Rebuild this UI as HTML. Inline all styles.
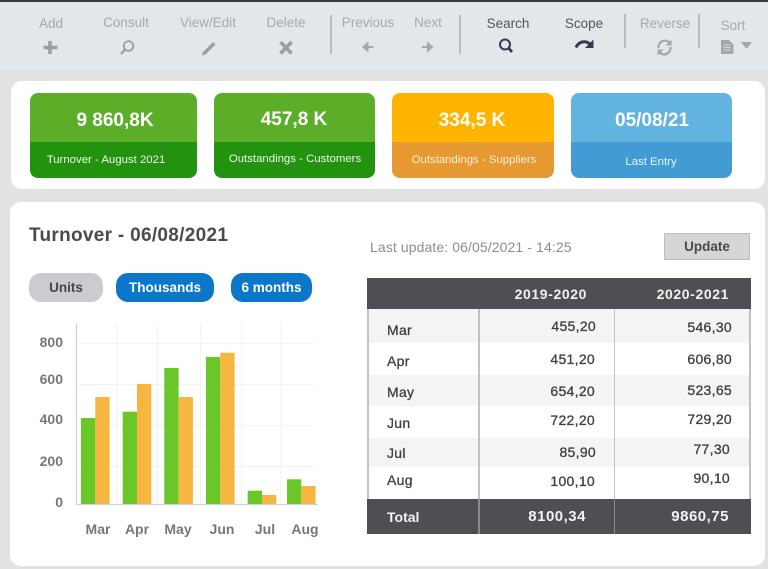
<!DOCTYPE html>
<html><head><meta charset="utf-8">
<style>
html,body{margin:0;padding:0}
body{width:768px;height:569px;overflow:hidden;position:relative;background:#e2e2e2;font-family:"Liberation Sans",sans-serif}
.a{position:absolute}
.t{position:absolute;white-space:nowrap;transform:translateX(-50%);line-height:16px}
.r{position:absolute;white-space:nowrap;transform:translateX(-100%);line-height:16px}
.l{position:absolute;white-space:nowrap;line-height:16px}
.tb{font-size:13.5px;color:#a6a8ab}
.kv{font-size:19px;font-weight:bold;color:#fff;line-height:22px}
.kl{font-size:11.4px;color:#f0f6ee}
.kpi{position:absolute;top:93px;height:85px;border-radius:8px;overflow:hidden}
.kpi div{position:absolute;left:0;right:0}
.pill{position:absolute;top:273px;height:29px;border-radius:12px;font-size:13.5px;font-weight:bold;line-height:29px;text-align:center;color:#fff;background:#0a77c9}
.ax{font-size:14px;font-weight:bold;color:#76767e}
.td{font-size:14px;color:#3f4045;letter-spacing:.3px;-webkit-text-stroke:.3px #3f4045}
svg{position:absolute;overflow:visible}
</style></head><body>
<div class="a" style="left:0;top:0;width:768px;height:2px;background:#3a3d3f"></div>
<div class="a" style="left:0;top:2px;width:768px;height:67px;background:#e4e7ea"></div>

<div class="t tb" style="left:51px;top:16px">Add</div>
<div class="t tb" style="left:126px;top:15px">Consult</div>
<div class="t tb" style="left:208px;top:15px">View/Edit</div>
<div class="t tb" style="left:286px;top:15px">Delete</div>
<div class="t tb" style="left:368px;top:15px">Previous</div>
<div class="t tb" style="left:428px;top:15px">Next</div>
<div class="t tb" style="left:508px;top:16px;color:#53565f">Search</div>
<div class="t tb" style="left:584px;top:16px;color:#53565f">Scope</div>
<div class="t tb" style="left:665px;top:16px">Reverse</div>
<div class="t tb" style="left:733px;top:18px">Sort</div>

<div class="a" style="left:330px;top:15px;width:2px;height:39px;background:#b9bcbf"></div>
<div class="a" style="left:459px;top:15px;width:2px;height:39px;background:#b9bcbf"></div>
<div class="a" style="left:624px;top:14px;width:2px;height:34px;background:#b9bcbf"></div>
<div class="a" style="left:698px;top:14px;width:2px;height:34px;background:#b9bcbf"></div>

<svg style="left:0;top:0" width="768" height="69" viewBox="0 0 768 69">
<path d="M50 41v13M43.500 47.500h14" stroke="#9c9ea1" stroke-width="3.600" fill="none"/>
<circle cx="128.500" cy="46" r="4.800" stroke="#9c9ea1" stroke-width="1.800" fill="none"/>
<path d="M125 49.500L121 54" stroke="#9c9ea1" stroke-width="2.200" fill="none"/>
<path d="M203 52l10-10 2.500 2.500-10 10-3.500 1z" fill="#9c9ea1"/>
<path d="M280.500 42l11 11.500M291.500 42l-11 11.500" stroke="#9c9ea1" stroke-width="3.600" fill="none"/>
<path d="M373.500 47h-8M367.500 43.500l-4 3.500 4 3.500z" stroke="#a6a8ab" stroke-width="2" fill="#a6a8ab"/>
<path d="M422 47h8M428 43.500l4 3.500-4 3.500z" stroke="#a6a8ab" stroke-width="2" fill="#a6a8ab"/>
<circle cx="505" cy="44.500" r="5" stroke="#333a50" stroke-width="2" fill="none"/>
<path d="M508.500 48l3.500 4" stroke="#333a50" stroke-width="2.800" fill="none"/>
<path d="M576 47.500c2.500-6 9-7.500 14-3.500" stroke="#333a50" stroke-width="3" fill="none"/>
<path d="M593.500 39.500v8.500h-8.500z" fill="#333a50"/>
<path d="M658.500 48a6.500 6.500 0 0 1 11-5.500M670.500 47a6.500 6.500 0 0 1-11 5.500" stroke="#a4a6a9" stroke-width="2.300" fill="none"/>
<path d="M671.500 39.500v6h-6zM657.500 55.500v-6h6z" fill="#a4a6a9"/>
<path d="M721 40h8l4.500 4.500V54h-12.500z" fill="#a4a6a9"/>
<path d="M723.500 45h7M723.500 47.500h7M723.500 50h7" stroke="#d5d7d9" stroke-width="1"/>
<path d="M741 42h11l-5.500 7z" fill="#a4a6a9"/>
</svg>

<div class="a" style="left:11px;top:81px;width:754px;height:108px;background:#fff;border-radius:11px"></div>
<div class="a" style="left:10px;top:202px;width:755px;height:364px;background:#fff;border-radius:11px"></div>

<div class="kpi" style="left:30px;width:167px"><div style="top:0;height:49px;background:#5cae29"></div><div style="top:49px;height:36px;background:#23920f"></div></div>
<div class="kpi" style="left:214px;width:161px"><div style="top:0;height:49px;background:#5cae29"></div><div style="top:49px;height:36px;background:#23920f"></div></div>
<div class="kpi" style="left:392px;width:162px"><div style="top:0;height:49px;background:#ffb400"></div><div style="top:49px;height:36px;background:#e79a32"></div></div>
<div class="kpi" style="left:571px;width:161px"><div style="top:0;height:49px;background:#62b3e0"></div><div style="top:49px;height:36px;background:#439bd4"></div></div>

<div class="t kv" style="left:115px;top:110px">9 860,8K</div>
<div class="t kv" style="left:294px;top:109px">457,8 K</div>
<div class="t kv" style="left:472px;top:110px">334,5 K</div>
<div class="t kv" style="left:652px;top:110px">05/08/21</div>
<div class="t kl" style="left:106px;top:152px">Turnover - August 2021</div>
<div class="t kl" style="left:295px;top:151px">Outstandings - Customers</div>
<div class="t kl" style="left:474px;top:152px;color:#fbeedd">Outstandings - Suppliers</div>
<div class="t kl" style="left:651px;top:154px;color:#e8f3fa">Last Entry</div>

<div class="l" style="left:29px;top:226px;font-size:19px;font-weight:bold;color:#4b4b4d;line-height:20px;letter-spacing:.3px">Turnover - 06/08/2021</div>
<div class="l" style="left:370px;top:239px;font-size:14px;color:#8b8d90;letter-spacing:.1px">Last update: 06/05/2021 - 14:25</div>
<div class="a" style="left:664px;top:233px;width:84px;height:25px;background:#d6d6d6;border:1px solid #bdbdbd;font-size:13.5px;font-weight:bold;color:#4a4a4d;text-align:center;line-height:25px">Update</div>

<div class="pill" style="left:29px;width:74px;background:#cbccd0;color:#47474a">Units</div>
<div class="pill" style="left:116px;width:98px">Thousands</div>
<div class="pill" style="left:231px;width:81px">6 months</div>

<svg style="left:0;top:0" width="768" height="569" viewBox="0 0 768 569">
<g stroke="#f3f3f4" stroke-width="1.300" fill="none">
<path d="M76 343.500H314M76 384.500H314M76 425.500H314M76 466.500H314"/>
<path d="M117 323V504M157.500 323V504M200.500 323V504M241.500 323V504M281 323V504"/>
</g>
<path d="M76.500 323V504.500H318" stroke="#d2d2d4" stroke-width="1.300" fill="none"/>
<g fill="#6bc62a">
<rect x="81" y="418" width="14.300" height="86"/>
<rect x="122.700" y="411.700" width="14.300" height="92.300"/>
<rect x="164.300" y="368" width="14.300" height="136"/>
<rect x="206" y="357" width="14.300" height="147"/>
<rect x="247.700" y="490.700" width="14.300" height="13.300"/>
<rect x="287" y="479.300" width="14.300" height="24.700"/>
</g>
<g fill="#f5b642">
<rect x="95.300" y="397" width="14.300" height="107"/>
<rect x="137" y="384" width="14.300" height="120"/>
<rect x="178.600" y="397" width="14.300" height="107"/>
<rect x="220.300" y="352.700" width="14.300" height="151.300"/>
<rect x="262" y="495" width="14.300" height="9"/>
<rect x="301.300" y="486" width="14.300" height="18"/>
</g>
</svg>

<div class="r ax" style="left:63px;top:334px">800</div>
<div class="r ax" style="left:63px;top:371px">600</div>
<div class="r ax" style="left:63px;top:411px">400</div>
<div class="r ax" style="left:63px;top:453px">200</div>
<div class="r ax" style="left:63px;top:494px">0</div>
<div class="t ax" style="left:98px;top:521px">Mar</div>
<div class="t ax" style="left:137px;top:521px">Apr</div>
<div class="t ax" style="left:178px;top:521px">May</div>
<div class="t ax" style="left:222px;top:521px">Jun</div>
<div class="t ax" style="left:265px;top:521px">Jul</div>
<div class="t ax" style="left:305px;top:521px">Aug</div>

<div class="a" style="left:367px;top:278px;width:384px;height:31px;background:#4e4f53"></div>
<div class="a" style="left:368px;top:309px;width:382px;height:34px;background:#f4f4f4"></div>
<div class="a" style="left:368px;top:375px;width:382px;height:31px;background:#f4f4f4"></div>
<div class="a" style="left:368px;top:438px;width:382px;height:29px;background:#f4f4f4"></div>
<div class="a" style="left:367px;top:499px;width:384px;height:35px;background:#4e4f53"></div>
<div class="a" style="left:367px;top:309px;width:2px;height:190px;background:#c2c2c2"></div>
<div class="a" style="left:749px;top:309px;width:2px;height:190px;background:#c2c2c2"></div>
<div class="a" style="left:478px;top:309px;width:1.500px;height:190px;background:#c2c2c2"></div>
<div class="a" style="left:613.500px;top:309px;width:1.500px;height:190px;background:#c2c2c2"></div>
<div class="a" style="left:478px;top:499px;width:1.500px;height:35px;background:#8b8b8e"></div>
<div class="a" style="left:613.500px;top:499px;width:1.500px;height:35px;background:#8b8b8e"></div>

<div class="r" style="left:587px;top:286px;color:#f2f2f2;font-size:14px;font-weight:bold;letter-spacing:.6px">2019-2020</div>
<div class="r" style="left:729px;top:286px;color:#f2f2f2;font-size:14px;font-weight:bold;letter-spacing:.6px">2020-2021</div>

<div class="l td" style="left:387px;top:322px">Mar</div>
<div class="l td" style="left:387px;top:353px">Apr</div>
<div class="l td" style="left:387px;top:384px">May</div>
<div class="l td" style="left:387px;top:415px">Jun</div>
<div class="l td" style="left:387px;top:445px">Jul</div>
<div class="l td" style="left:387px;top:472px">Aug</div>

<div class="r td" style="left:596px;top:318px">455,20</div>
<div class="r td" style="left:595px;top:351px">451,20</div>
<div class="r td" style="left:595px;top:383px">654,20</div>
<div class="r td" style="left:595px;top:412px">722,20</div>
<div class="r td" style="left:596px;top:444px">85,90</div>
<div class="r td" style="left:595px;top:473px">100,10</div>

<div class="r td" style="left:732px;top:319px">546,30</div>
<div class="r td" style="left:732px;top:351px">606,80</div>
<div class="r td" style="left:732px;top:382px">523,65</div>
<div class="r td" style="left:732px;top:411px">729,20</div>
<div class="r td" style="left:730px;top:441px">77,30</div>
<div class="r td" style="left:730px;top:470px">90,10</div>

<div class="l" style="left:387px;top:509px;color:#f2f2f2;font-size:14px;font-weight:bold">Total</div>
<div class="r" style="left:586px;top:509px;color:#f2f2f2;font-size:15px;font-weight:bold;letter-spacing:.5px">8100,34</div>
<div class="r" style="left:729px;top:509px;color:#f2f2f2;font-size:15px;font-weight:bold;letter-spacing:.5px">9860,75</div>
</body></html>
